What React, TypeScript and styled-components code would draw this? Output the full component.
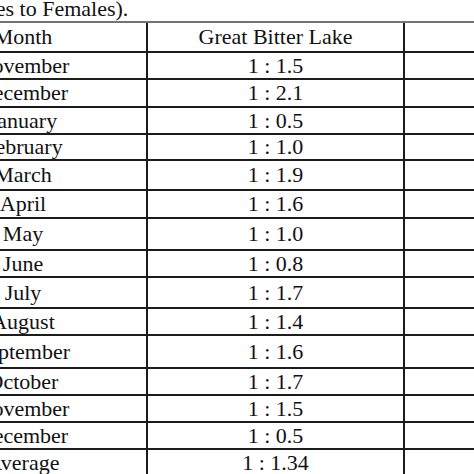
import React from "react";
import styled, { createGlobalStyle } from "styled-components";

const GlobalStyle = createGlobalStyle`
  html, body {
    margin: 0;
    padding: 0;
    background: #ffffff;
  }
  body {
    font-family: "Liberation Serif", "Times New Roman", serif;
    color: #111111;
  }
`;

// the screenshot is a crop of a wider table: the first column starts off-screen
const Viewport = styled.div`
  width: 474px;
  height: 474px;
  overflow: hidden;
  background: #ffffff;
`;

const Sheet = styled.div`
  margin-left: -100px;
  width: 720px;
  font-size: 22px;
`;

const Caption = styled.div`
  height: 21px;
  line-height: 18px;
  padding-left: 53px;
  white-space: nowrap;
`;

const Table = styled.div`
  display: flex;
  flex-direction: column;
`;

const Row = styled.div<{ $h: number; $head?: boolean }>`
  display: grid;
  grid-template-columns: 248px 257px 1fr;
  height: ${(p) => p.$h}px;
  border-top: 2px solid ${(p) => (p.$head ? "#737373" : "#1c1c1c")};
  box-sizing: border-box;
  line-height: ${(p) => p.$h - 2}px;
`;

const Cell = styled.div<{ $last?: boolean }>`
  text-align: center;
  white-space: nowrap;
  border-right: ${(p) => (p.$last ? "none" : "2px solid #1c1c1c")};
`;

type Entry = { month: string; ratio: string; h: number };

const rows: Entry[] = [
  { month: "November", ratio: "1 : 1.5", h: 27 },
  { month: "December", ratio: "1 : 2.1", h: 28 },
  { month: "January", ratio: "1 : 0.5", h: 27 },
  { month: "February", ratio: "1 : 1.0", h: 26 },
  { month: "March", ratio: "1 : 1.9", h: 30 },
  { month: "April", ratio: "1 : 1.6", h: 28 },
  { month: "May", ratio: "1 : 1.0", h: 32 },
  { month: "June", ratio: "1 : 0.8", h: 27 },
  { month: "July", ratio: "1 : 1.7", h: 31 },
  { month: "August", ratio: "1 : 1.4", h: 27 },
  { month: "September", ratio: "1 : 1.6", h: 33 },
  { month: "October", ratio: "1 : 1.7", h: 27 },
  { month: "November", ratio: "1 : 1.5", h: 27 },
  { month: "December", ratio: "1 : 0.5", h: 27 },
  { month: "Average", ratio: "1 : 1.34", h: 28 },
];

export default function App() {
  return (
    <>
      <GlobalStyle />
      <Viewport>
        <Sheet>
          <Caption>(Males to Females).</Caption>
          <Table>
            <Row $h={30} $head>
              <Cell>Month</Cell>
              <Cell>Great Bitter Lake</Cell>
              <Cell $last />
            </Row>
            {rows.map((r, i) => (
              <Row key={i} $h={r.h}>
                <Cell>{r.month}</Cell>
                <Cell>{r.ratio}</Cell>
                <Cell $last />
              </Row>
            ))}
          </Table>
        </Sheet>
      </Viewport>
    </>
  );
}
